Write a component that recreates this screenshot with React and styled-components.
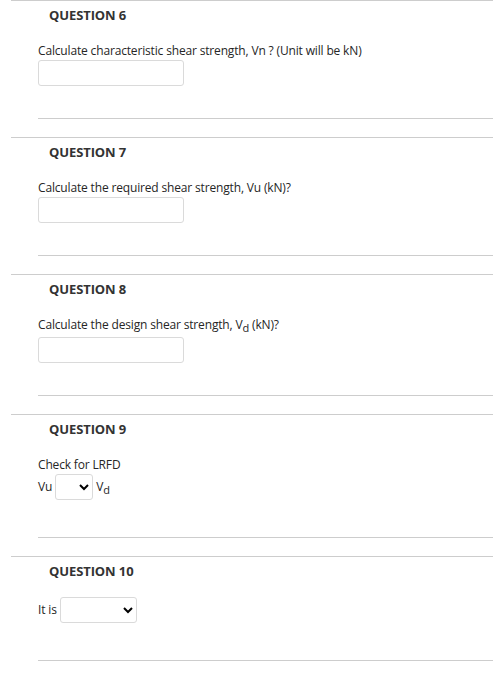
import React from "react";
import styled, { createGlobalStyle } from "styled-components";

const Global = createGlobalStyle`
  html, body { margin: 0; padding: 0; background: #fff; }
  body { font-family: "Open Sans", "Liberation Sans", sans-serif; color: #333; }
`;

const Page = styled.div`
  width: 493px;
  overflow: hidden;
`;

const Section = styled.section`
  margin: 0 0 18px 11px;
  border-top: 1px solid #cdcdcd;
`;

const Title = styled.h3`
  margin: 5px 0 0 38px;
  font-size: 13px;
  line-height: 18px;
  font-weight: 700;
  color: #333;
  letter-spacing: -0.1px;
`;

const Body = styled.div`
  margin-left: 27px;
  padding-top: ${(p) => p.$top ?? 18}px;
  padding-bottom: ${(p) => p.$bottom ?? 32}px;
  border-bottom: 1px solid #cdcdcd;
`;

const Prompt = styled.div`
  font-size: 12px;
  line-height: 18px;
  color: #262626;
  letter-spacing: -0.16px;
  padding-bottom: ${(p) => (p.$tall ? 3 : 0)}px;
  sub {
    font-size: 11px;
    line-height: 1;
    vertical-align: -3px;
  }
`;

const TextInput = styled.input`
  display: block;
  box-sizing: border-box;
  width: 146px;
  height: 26px;
  margin: 0;
  border: 1px solid #dadada;
  border-radius: 3px;
  background: #fff;
  font: 12px "Open Sans", sans-serif;
`;

const Row = styled.div`
  display: flex;
  align-items: center;
  gap: 3px;
  font-size: 12px;
  line-height: 18px;
  color: #262626;
  letter-spacing: -0.16px;
  sub {
    font-size: 11px;
    line-height: 0;
  }
`;

const Select = styled.select`
  box-sizing: border-box;
  width: ${(p) => p.$w}px;
  height: 26px;
  margin: 0;
  border: 1px solid #dadada;
  border-radius: 3px;
  background: #fff;
  color: #000;
  font: 12px "Open Sans", sans-serif;
`;

export default function App() {
  return (
    <Page>
      <Global />
      <Section>
        <Title>QUESTION 6</Title>
        <Body>
          <Prompt>Calculate characteristic shear strength, Vn ? (Unit will be kN)</Prompt>
          <TextInput type="text" />
        </Body>
      </Section>
      <Section>
        <Title>QUESTION 7</Title>
        <Body>
          <Prompt>Calculate the required shear strength, Vu (kN)?</Prompt>
          <TextInput type="text" />
        </Body>
      </Section>
      <Section>
        <Title>QUESTION 8</Title>
        <Body>
          <Prompt $tall>
            Calculate the design shear strength, V<sub>d</sub> (kN)?
          </Prompt>
          <TextInput type="text" />
        </Body>
      </Section>
      <Section>
        <Title>QUESTION 9</Title>
        <Body $bottom={37}>
          <Prompt>Check for LRFD</Prompt>
          <Row>
            Vu
            <Select $w={38}>
              <option></option>
            </Select>
            <span>
              V<sub>d</sub>
            </span>
          </Row>
        </Body>
      </Section>
      <Section>
        <Title>QUESTION 10</Title>
        <Body $top={17} $bottom={37}>
          <Row>
            It is
            <Select $w={77}>
              <option></option>
            </Select>
          </Row>
        </Body>
      </Section>
    </Page>
  );
}
